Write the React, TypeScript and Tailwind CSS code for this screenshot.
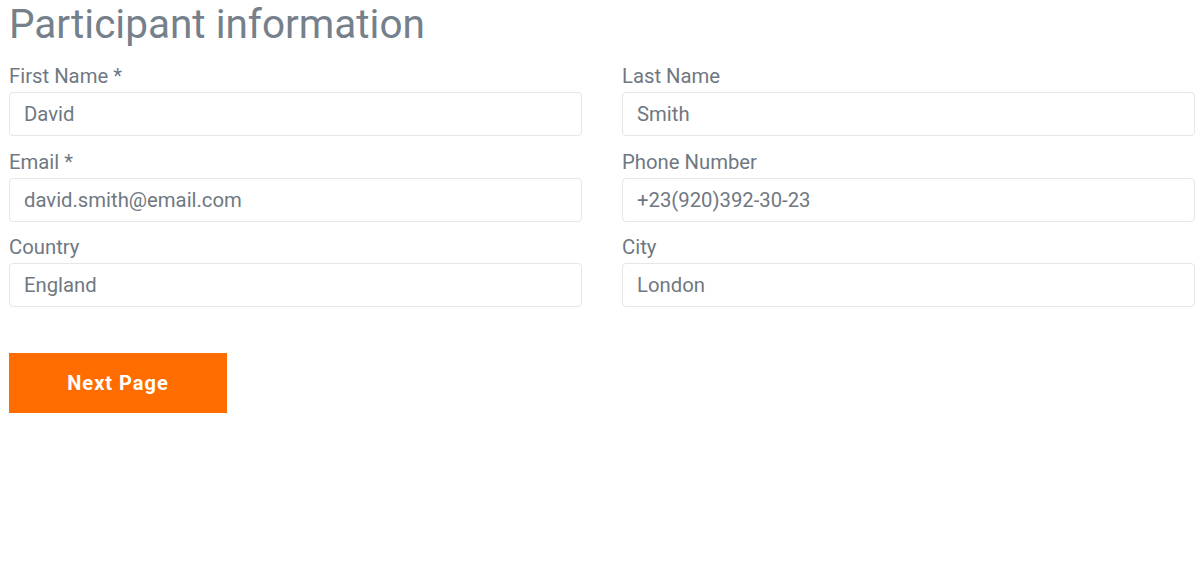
import React from 'react';

const fields = [
  { label: 'First Name *', value: 'David' },
  { label: 'Last Name', value: 'Smith' },
  { label: 'Email *', value: 'david.smith@email.com' },
  { label: 'Phone Number', value: '+23(920)392-30-23' },
  { label: 'Country', value: 'England' },
  { label: 'City', value: 'London' },
];

export default function App() {
  return (
    <main className="min-h-screen bg-white pl-[9px] pr-[5px] font-['Roboto',sans-serif]">
      <h1 className="text-[40.5px] leading-[48px] text-[#75808b] font-normal">Participant information</h1>

      <form className="mt-[16px] grid grid-cols-2 gap-x-10" onSubmit={(e) => e.preventDefault()}>
        {fields.map((f) => (
          <div key={f.label} className="mb-[13.5px]">
            <label className="block text-[20.3px] leading-6 text-[#6f7882] mb-1">{f.label}</label>
            <input
              type="text"
              defaultValue={f.value}
              className="w-full h-[44px] px-[14px] rounded border border-[#e6e6e6] bg-white text-[20.3px] text-[#6f7882] focus:outline-none"
            />
          </div>
        ))}
      </form>

      <button
        type="button"
        className="mt-[32.5px] w-[218px] h-[60px] bg-[#ff6d00] text-white text-[20px] font-bold tracking-[1px]"
      >
        Next Page
      </button>
    </main>
  );
}
